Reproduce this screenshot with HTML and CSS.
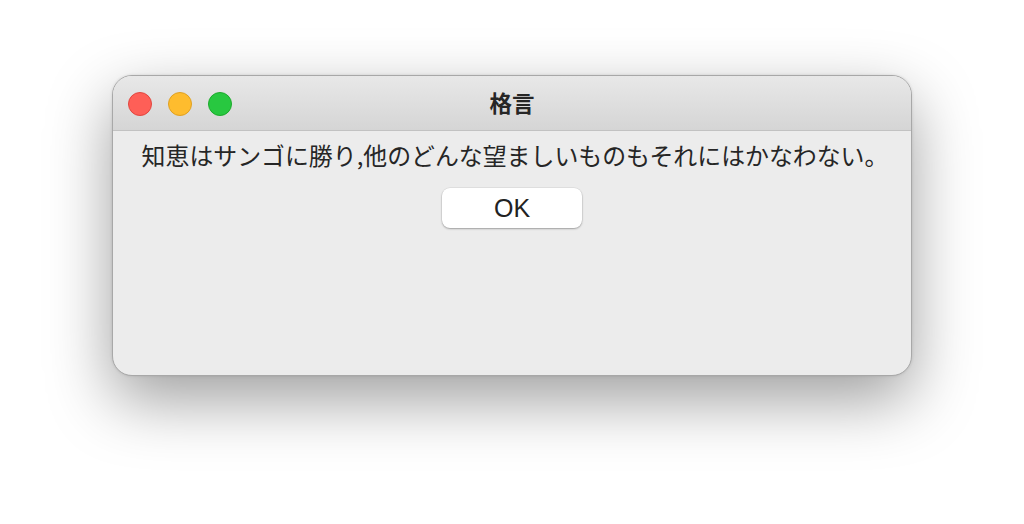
FILE: index.html
```html
<!DOCTYPE html>
<html lang="ja">
<head>
<meta charset="utf-8">
<link rel="stylesheet" href="styles.css">
</head>
<body>
<div class="stage">
  <div class="window">
    <div class="titlebar">
      <div class="lights">
        <span class="light red"></span>
        <span class="light yellow"></span>
        <span class="light green"></span>
      </div>
      <div class="title">格言</div>
    </div>
    <div class="content">
      <p class="message">知恵はサンゴに勝り,他のどんな望ましいものもそれにはかなわない。</p>
      <button class="ok">OK</button>
    </div>
  </div>
</div>
</body>
</html>
```
FILE: styles.css
```css
html, body {
  margin: 0;
  padding: 0;
  background: #ffffff;
}
body {
  width: 1024px;
  height: 524px;
  overflow: hidden;
  font-family: "Noto Sans CJK JP", "Noto Sans", sans-serif;
}
.stage {
  display: flex;
  justify-content: center;
  padding-top: 75px;
}
.window {
  width: 800px;
  height: 301px;
  box-sizing: border-box;
  border: 1px solid #a8a8a8;
  border-radius: 20px;
  background: #ececec;
  overflow: hidden;
  display: flex;
  flex-direction: column;
  box-shadow: 0 24px 64px rgba(0, 0, 0, 0.38), 0 0 3px rgba(0, 0, 0, 0.12);
}
.titlebar {
  position: relative;
  height: 54px;
  flex: none;
  background: linear-gradient(#e8e8e8, #d5d5d5);
  border-bottom: 1px solid #c2c2c2;
  display: flex;
  align-items: center;
  justify-content: center;
}
.lights {
  position: absolute;
  left: 15px;
  top: 16px;
  display: flex;
  gap: 16px;
}
.light {
  width: 24px;
  height: 24px;
  border-radius: 50%;
  box-sizing: border-box;
}
.red { background: #fe5f57; border: 1px solid #e1463f; }
.yellow { background: #febc2e; border: 1px solid #dfa022; }
.green { background: #28c840; border: 1px solid #1daa2c; }
.title {
  font-size: 22.5px;
  font-weight: bold;
  color: #262626;
  margin-top: -3px;
}
.content {
  display: flex;
  flex-direction: column;
  align-items: center;
}
.message {
  margin: 7px 0 0 6px;
  font-size: 23.9px;
  line-height: 34px;
  color: #262626;
  white-space: nowrap;
}
.ok {
  margin-top: 16px;
  width: 140px;
  height: 40px;
  border: none;
  border-radius: 8px;
  background: #ffffff;
  box-shadow: 0 1px 2px rgba(0, 0, 0, 0.3), 0 0 0 0.5px rgba(0, 0, 0, 0.08);
  font-family: "Liberation Sans", "Noto Sans", sans-serif;
  font-size: 25px;
  color: #222222;
  padding: 0;
}
```
